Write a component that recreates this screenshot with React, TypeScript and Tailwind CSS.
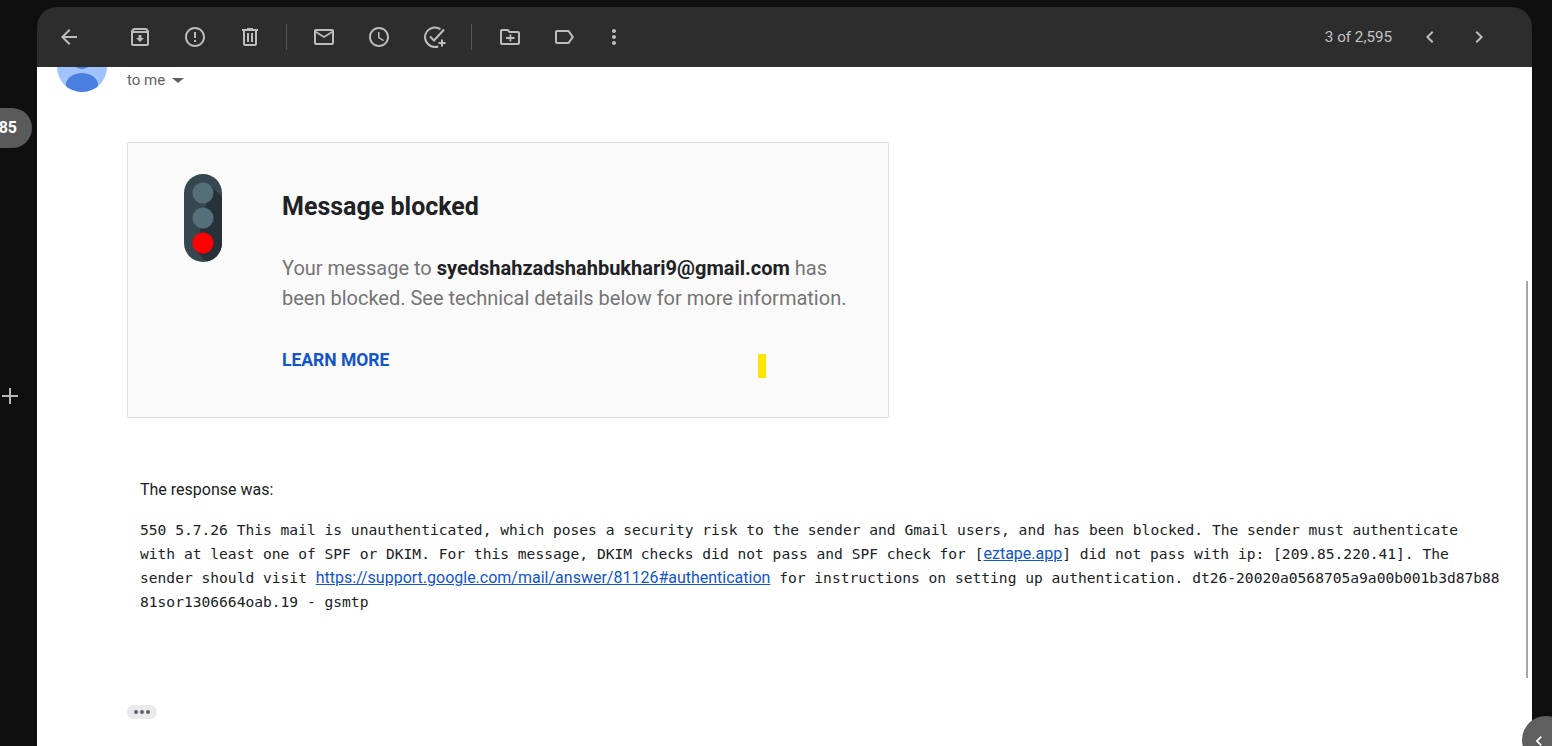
import React from 'react';

const icons = {
  back: 'M20 11H7.83l5.59-5.59L12 4l-8 8 8 8 1.41-1.41L7.83 13H20v-2z',
  archive:
    'M20.54 5.23l-1.39-1.68C18.88 3.21 18.47 3 18 3H6c-.47 0-.88.21-1.16.55L3.46 5.23C3.17 5.57 3 6.02 3 6.5V19c0 1.1.9 2 2 2h14c1.1 0 2-.9 2-2V6.5c0-.48-.17-.93-.46-1.27zM6.24 5h11.52l.81.97H5.44l.8-.97zM5 19V8h14v11H5zm8.45-9h-2.9v3H8l4 4 4-4h-2.55z',
  report:
    'M11 15h2v2h-2zm0-8h2v6h-2zm.99-5C6.47 2 2 6.48 2 12s4.47 10 9.99 10C17.52 22 22 17.52 22 12S17.52 2 11.99 2zM12 20c-4.42 0-8-3.58-8-8s3.58-8 8-8 8 3.58 8 8-3.58 8-8 8z',
  trash:
    'M15 4V3H9v1H4v2h1v13c0 1.1.9 2 2 2h10c1.1 0 2-.9 2-2V6h1V4h-5zm2 15H7V6h10v13zM9 8h2v9H9zm4 0h2v9h-2z',
  mail: 'M22 6c0-1.1-.9-2-2-2H4c-1.1 0-2 .9-2 2v12c0 1.1.9 2 2 2h16c1.1 0 2-.9 2-2V6zm-2 0l-8 5-8-5h16zm0 12H4V8l8 5 8-5v10z',
  clock:
    'M11.99 2C6.47 2 2 6.48 2 12s4.47 10 9.99 10C17.52 22 22 17.52 22 12S17.52 2 11.99 2zM12 20c-4.42 0-8-3.58-8-8s3.58-8 8-8 8 3.58 8 8-3.58 8-8 8zm.5-13H11v6l5.25 3.15.75-1.23-4.5-2.67z',
  move: 'M20 6h-8l-2-2H4c-1.1 0-2 .9-2 2v12c0 1.1.9 2 2 2h16c1.1 0 2-.9 2-2V8c0-1.1-.9-2-2-2zm0 12H4V6h5.17l2 2H20v10zM8 12h3.5V9.5h1.8v2.5H16.5v2h-3.2v2.5h-1.8V14H8z',
  label:
    'M17.63 5.84C17.27 5.33 16.67 5 16 5L5 5.01C3.9 5.01 3 5.9 3 7v10c0 1.1.9 1.99 2 1.99L16 19c.67 0 1.27-.33 1.63-.84L22 12l-4.37-6.16zM16 17H5V7h11l3.55 5L16 17z',
  more: 'M12 8c1.1 0 2-.9 2-2s-.9-2-2-2-2 .9-2 2 .9 2 2 2zm0 2c-1.1 0-2 .9-2 2s.9 2 2 2 2-.9 2-2-.9-2-2-2zm0 6c-1.1 0-2 .9-2 2s.9 2 2 2 2-.9 2-2-.9-2-2-2z',
  prev: 'M15.41 7.41L14 6l-6 6 6 6 1.41-1.41L10.83 12z',
  next: 'M10 6L8.59 7.41 13.17 12l-4.58 4.59L10 18l6-6z',
};

function ToolIcon({ d, className }: { d: string; className?: string }) {
  return (
    <button className={`flex h-10 w-10 shrink-0 items-center justify-center ${className ?? ''}`}>
      <svg viewBox="0 0 24 24" className="h-6 w-6 fill-[#bdbdbd]">
        <path d={d} />
      </svg>
    </button>
  );
}

function AddTaskIcon({ className }: { className?: string }) {
  return (
    <button className={`flex h-10 w-10 shrink-0 items-center justify-center ${className ?? ''}`}>
      <svg viewBox="0 0 24 24" className="h-6 w-6 fill-none stroke-[#bdbdbd] stroke-2">
        <path d="M17.5 4.2A10 10 0 0 0 2 12a10 10 0 0 0 10 10c1.2 0 2.2-.2 3.2-.5" />
        <path d="M7 11.5l4 4L21 4.5" />
        <path d="M19 14.5v7M15.5 18h7" />
      </svg>
    </button>
  );
}

function TrafficLight() {
  return (
    <svg viewBox="0 0 38 88" className="h-[88px] w-[38px]">
      <defs>
        <clipPath id="light-body">
          <rect width="38" height="88" rx="19" />
        </clipPath>
      </defs>
      <rect width="38" height="88" rx="19" fill="#37474f" />
      <g clipPath="url(#light-body)">
        <polygon points="26.4,11.6 66.4,51.6 51.6,116.4 11.6,76.4" fill="#263238" />
      </g>
      <circle cx="19" cy="19" r="10.5" fill="#546e7a" />
      <circle cx="19" cy="44" r="10.5" fill="#546e7a" />
      <circle cx="19" cy="69" r="10.5" fill="#ff0000" />
    </svg>
  );
}

function Avatar() {
  return (
    <svg viewBox="0 0 50 50" className="-mt-[25px] h-[50px] w-[50px] shrink-0 rounded-full bg-[#a0c3ff]">
      <circle cx="25" cy="17" r="10" fill="#4a7fe0" />
      <ellipse cx="25" cy="43" rx="16" ry="12" fill="#4a7fe0" />
    </svg>
  );
}

export default function App() {
  return (
    <div className="relative flex h-[746px] w-[1552px] overflow-hidden bg-[#0f0f0f] font-['Roboto',sans-serif]">
      <main className="ml-[37px] mt-[7px] flex w-[1495px] flex-col">
        <header className="relative z-10 flex h-[60px] shrink-0 items-center rounded-t-[20px] bg-[#2d2d2d] pl-3">
          <ToolIcon d={icons.back} />
          <ToolIcon d={icons.archive} className="ml-[31px]" />
          <ToolIcon d={icons.report} className="ml-[15px]" />
          <ToolIcon d={icons.trash} className="ml-[15px]" />
          <div className="ml-4 h-[26px] w-px bg-[#555555]" />
          <ToolIcon d={icons.mail} className="ml-[17px]" />
          <ToolIcon d={icons.clock} className="ml-[15px]" />
          <AddTaskIcon className="ml-4" />
          <div className="ml-4 h-[26px] w-px bg-[#555555]" />
          <ToolIcon d={icons.move} className="ml-[18px]" />
          <ToolIcon d={icons.label} className="ml-[14px]" />
          <ToolIcon d={icons.more} className="ml-[10px]" />
          <span className="ml-auto text-[15.2px] text-[#c4c4c4]">3 of 2,595</span>
          <ToolIcon d={icons.prev} className="ml-[18px]" />
          <ToolIcon d={icons.next} className="ml-[9px] mr-[33px]" />
        </header>

        <div className="flex-1 overflow-hidden bg-white pl-5">
          <div className="flex">
            <Avatar />
            <div className="ml-5 mt-[3px] flex h-5 items-center text-[15px] text-[#5f6368]">
              to me
              <span className="ml-[7px] h-0 w-0 border-x-[6px] border-t-[5px] border-x-transparent border-t-[#5f6368]" />
            </div>
          </div>

          <section className="ml-[70px] mt-[50px] flex h-[276px] w-[762px] rounded-[2px] border border-[#e0e0e0] bg-[#fafafa] pl-[56px] pt-[31px]">
            <div className="shrink-0">
              <TrafficLight />
            </div>
            <div className="ml-[60px]">
              <h1 className="mt-[17px] text-[25px] leading-8 font-bold text-[#202124]">Message blocked</h1>
              <p className="mt-[30px] w-[580px] text-xl leading-[30px] text-[#757575]">
                Your message to <b className="font-bold text-[#202124]">syedshahzadshahbukhari9@gmail.com</b> has
                <br />
                been blocked. See technical details below for more information.
              </p>
              <a className="mt-[35px] block text-[17.5px] leading-6 font-bold text-[#1155cc]">LEARN MORE</a>
            </div>
          </section>

          <div className="ml-[83px] mt-[60px]">
            <p className="text-base leading-6 text-[#202124]">The response was:</p>
            <p className="mt-4 w-[1365px] font-['DejaVu_Sans_Mono',monospace] text-[14.6px] leading-6 break-all text-[#202124]">
              550 5.7.26 This mail is unauthenticated, which poses a security risk to the sender and Gmail users, and has been blocked. The sender must authenticate
              <br />
              with at least one of SPF or DKIM. For this message, DKIM checks did not pass and SPF check for [<a className="font-['Roboto',sans-serif] text-base text-[#1155cc] underline">eztape.app</a>] did not pass with ip: [209.85.220.41]. The
              <br />
              sender should visit <a className="font-['Roboto',sans-serif] text-base text-[#1155cc] underline">https://support.google.com/mail/answer/81126#authentication</a> for instructions on setting up authentication. dt26-20020a0568705a9a00b001b3d87b88
              <br />
              81sor1306664oab.19 - gsmtp
            </p>
          </div>

          <div className="ml-[70px] mt-[91px] flex h-[14px] w-[30px] items-center justify-center gap-[2px] rounded-full bg-[#e8eaed]">
            <span className="h-1 w-1 rounded-full bg-[#5f6368]" />
            <span className="h-1 w-1 rounded-full bg-[#5f6368]" />
            <span className="h-1 w-1 rounded-full bg-[#5f6368]" />
          </div>
        </div>
      </main>

      {/* floating bits over the page */}
      <div className="absolute left-[-20px] top-[108px] flex h-10 w-[52px] items-center justify-end rounded-full bg-[#5a5a5a] pr-[15px] text-base font-bold text-white">
        85
      </div>
      <svg viewBox="0 0 16 16" className="absolute left-[2px] top-[388px] h-4 w-4 stroke-[#b8b8b8] stroke-2">
        <path d="M8 0v16M0 8h16" />
      </svg>
      <div className="absolute left-[758px] top-[354px] h-6 w-2 bg-[#ffe600]" />
      <div className="absolute left-[1526px] top-[281px] h-[397px] w-[2px] bg-[#a6a6a6]" />
      <div className="absolute left-[1522px] top-[716px] flex h-12 w-12 items-start rounded-full bg-[#5f5f5f] pl-[7px] pt-[15px]">
        <svg viewBox="0 0 24 24" className="h-5 w-5 fill-white">
          <path d={icons.prev} />
        </svg>
      </div>
    </div>
  );
}
